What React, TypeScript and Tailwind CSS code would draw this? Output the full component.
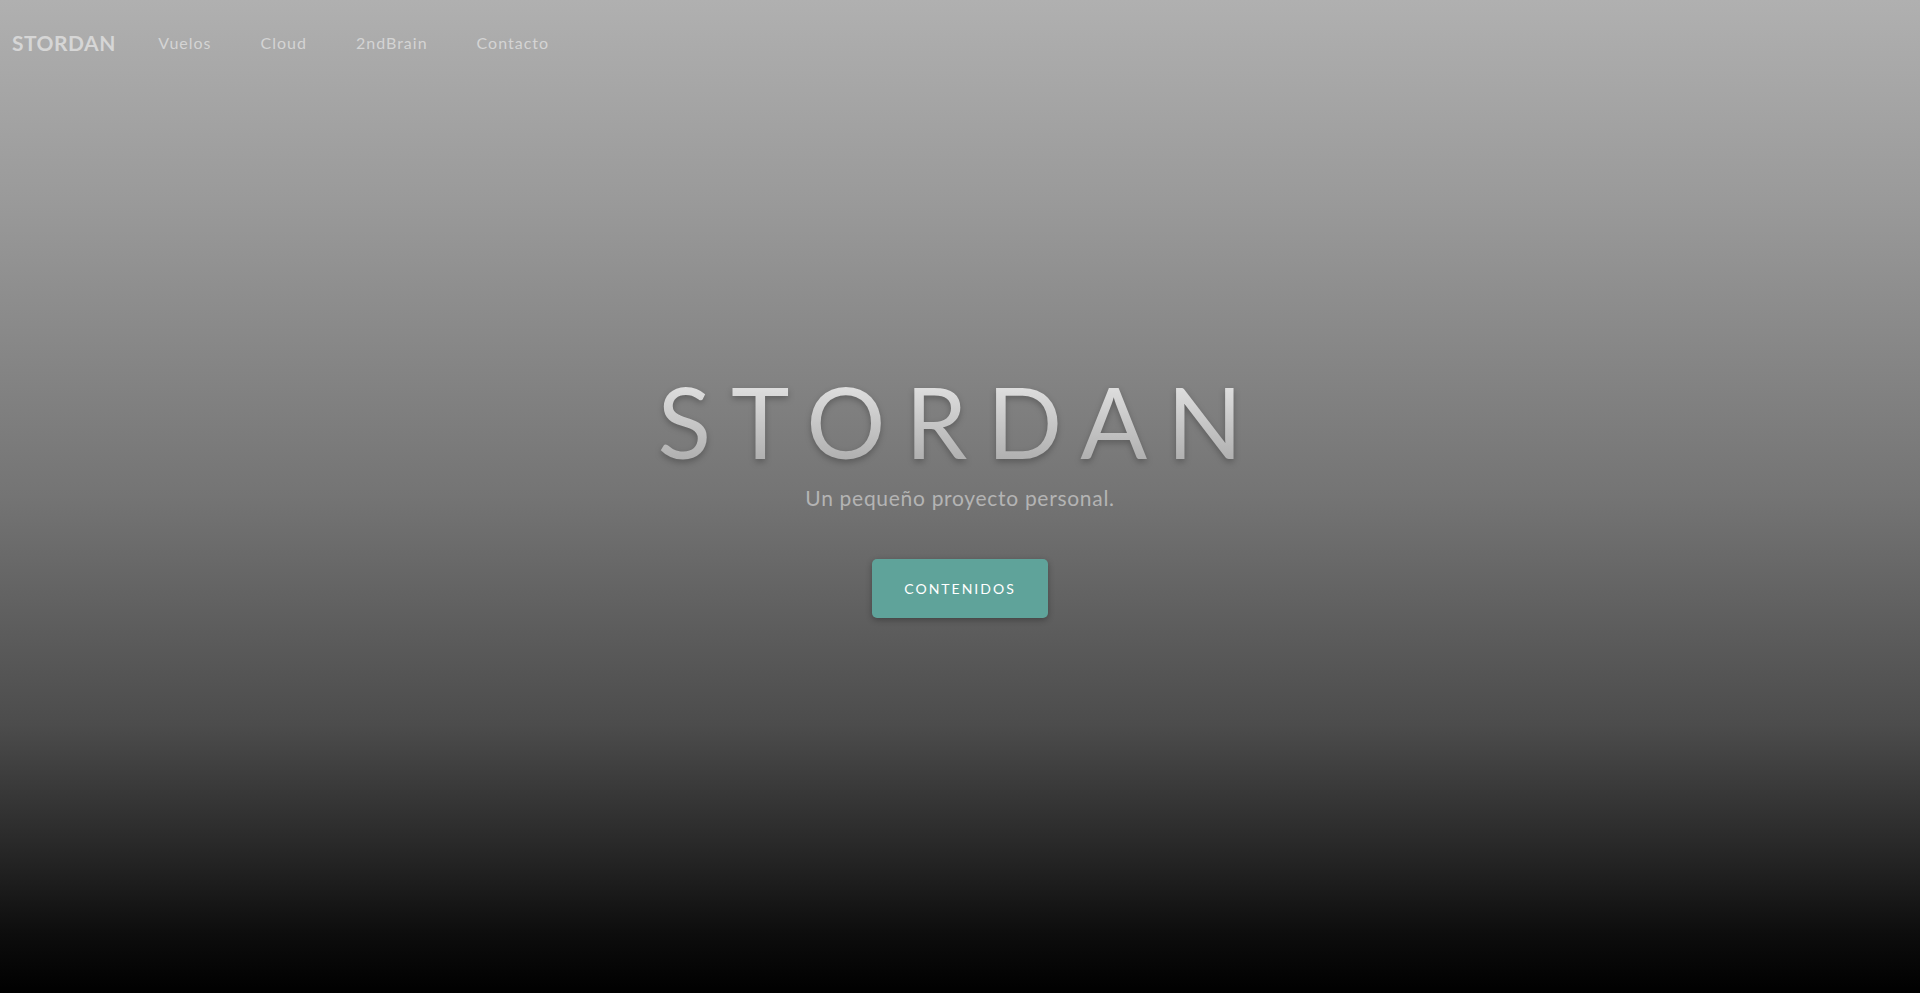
import React from "react";

export default function App() {
  return (
    <div
      className="relative flex h-[993px] w-full flex-col overflow-hidden font-['Lato',_'Noto_Sans',_sans-serif]"
      style={{
        background:
          "linear-gradient(to bottom, #b0b0b0 0%, #9a9a9a 20%, #747474 50%, #4c4c4c 73%, #262626 86%, #0d0d0d 94%, #000000 100%)",
      }}
    >
      <nav className="absolute left-0 right-0 top-0 flex items-center pl-[12px] pt-[27px]">
        <span className="text-[21px] font-bold tracking-[0.5px] text-[#d6d6d6]">STORDAN</span>
        <ul className="ml-[18px] flex items-center">
          {["Vuelos", "Cloud", "2ndBrain", "Contacto"].map((l) => (
            <li key={l} className="px-[24.5px] text-[16px] tracking-[1px] text-[#d4d4d4]">
              {l}
            </li>
          ))}
        </ul>
      </nav>

      <main className="flex flex-1 flex-col items-center justify-center pb-[8px]">
        <h1 className="bg-gradient-to-b from-[#ebebeb] to-[#a6a6a6] bg-clip-text text-[99px] font-normal leading-[1.1] tracking-[0.2em] text-transparent drop-shadow-[0_3px_3px_rgba(0,0,0,0.25)]">
          STORDAN
        </h1>
        <p className="mt-[6px] text-[21px] tracking-[0.7px] text-[#b4b4b4]">Un pequeño proyecto personal.</p>
        <button className="mt-[45px] h-[59px] w-[176px] rounded-[5px] bg-[#5fa39a] text-[14px] tracking-[2px] text-white shadow-[0_2px_6px_rgba(0,0,0,0.3)]">
          CONTENIDOS
        </button>
      </main>
    </div>
  );
}
